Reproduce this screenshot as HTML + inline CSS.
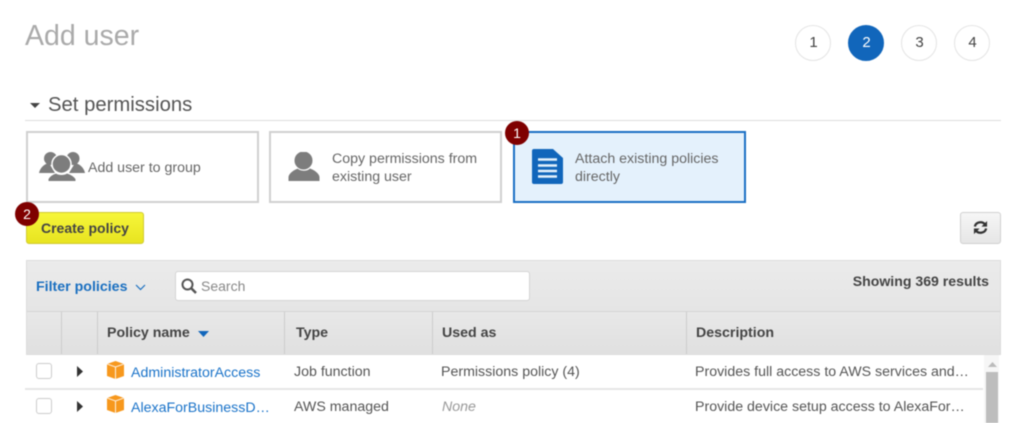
<!DOCTYPE html>
<html><head><meta charset="utf-8"><style>
html,body{margin:0;padding:0;background:#fff}
#p{position:relative;width:1024px;height:423px;overflow:hidden;background:#fff;font-family:"Liberation Sans",sans-serif;filter:blur(.45px)}
#p div,#p span.a,#p svg{position:absolute}
.t{white-space:nowrap}
.c{box-sizing:border-box;width:36px;height:36px;border:1px solid #e4e4e4;border-radius:50%;text-align:center;line-height:34px;font-size:15px;color:#444;top:25px;padding-left:1px}
.box{box-sizing:border-box;top:131px;height:72px;width:233px;border:2px solid #d0d0d0;background:#fff}
.lbl{font-size:14.2px;line-height:18px;color:#666;white-space:nowrap}
.bad{width:24px;height:24px;border-radius:50%;background:#7f0000;color:#fff;font-size:14px;line-height:24px;text-align:center}
.th{font-size:14.2px;font-weight:bold;color:#444;top:325px;white-space:nowrap}
.vl{width:1px;top:312px;height:42px;background:#ccc}
.cell{font-size:14.2px;color:#555;white-space:nowrap}
.cb{box-sizing:border-box;left:36px;width:16px;height:16px;border:1px solid #ccc;border-radius:3px;background:#fff}
</style></head><body><div id="p">
<div class="t" style="left:25px;top:19px;font-size:28.500px;line-height:34px;color:#aaa">Add user</div>
<div class="c" style="left:795px">1</div>
<div class="c" style="left:848px;background:#1166bb;border-color:#1166bb;color:#fff">2</div>
<div class="c" style="left:901px">3</div>
<div class="c" style="left:954px">4</div>
<svg style="left:30px;top:103px" width="10" height="6"><path d="M0 0H10L5 5Z" fill="#444"/></svg>
<div class="t" style="left:48px;top:93px;font-size:20.300px;line-height:24px;color:#555">Set permissions</div>
<div style="left:25px;top:120px;width:976px;height:1px;background:#ddd"></div>

<div class="box" style="left:26px"></div>
<svg style="left:39px;top:151px" width="47" height="31" viewBox="0 0 47 31" fill="#7d7d7d">
<circle cx="11.500" cy="7.500" r="6.500"/><circle cx="34" cy="7.500" r="6.500"/>
<path d="M0 22C1 17 5 13 10 12L16 22Z"/><path d="M46 22C45 17 41 13 36 12L30 22Z"/>
<circle cx="22.500" cy="13" r="9.500" stroke="#fff" stroke-width="1.500"/>
<path d="M9 30.500V28C10 26 13 23 17 22C20 24 25 24 28 22C32 23 36 26 37 28V30.500Z" stroke="#fff" stroke-width="1"/>
</svg>
<div class="lbl" style="left:88px;top:159px">Add user to group</div>

<div class="box" style="left:269px"></div>
<svg style="left:288px;top:152px" width="32" height="30" viewBox="0 0 32 30" fill="#7d7d7d">
<path d="M0.500 29V25C1 21 6 18 10 16.500C13 19.500 19 19.500 22 16.500C26 18 31 21 31.500 25V29Z"/>
<circle cx="15.500" cy="8.500" r="9.500" stroke="#fff" stroke-width="1"/>
</svg>
<div class="lbl" style="left:332px;top:150px">Copy permissions from<br>existing user</div>

<div class="box" style="left:513px;background:#e4f1fc;border-color:#1a6fc4"></div>
<svg style="left:532px;top:149px" width="31" height="35" viewBox="0 0 31 35">
<path d="M2 0H21L31 9V33Q31 35 29 35H2Q0 35 0 33V2Q0 0 2 0Z" fill="#1166bb"/>
<path d="M6 10.500H25M6 16.500H25M6 22H25M6 27.500H25" stroke="#e4f1fc" stroke-width="2.500"/>
</svg>
<div class="lbl" style="left:575px;top:150px">Attach existing policies<br>directly</div>
<div class="bad" style="left:505px;top:121px">1</div>

<div style="box-sizing:border-box;left:26px;top:212px;width:118px;height:32px;border:1px solid #d0ca30;border-radius:3px;background:linear-gradient(#f6f63a,#e8e420);font-size:14px;font-weight:bold;color:#444;line-height:30px;padding-left:14px">Create policy</div>
<div class="bad" style="left:15px;top:202px">2</div>
<div style="box-sizing:border-box;left:960px;top:212px;width:41px;height:32px;border:1px solid #d0d0d0;border-radius:3px;background:linear-gradient(#f6f6f6,#e6e6e6)"></div>
<svg style="left:973px;top:220px" width="15" height="15" viewBox="0 0 16 16" fill="none" stroke="#333" stroke-width="2.400">
<path d="M2 7A6 5.500 0 0 1 13 5"/><path d="M14 9A6 5.500 0 0 1 3 11"/>
<path d="M15 1V7H9Z" fill="#333" stroke="none"/><path d="M1 15V9H7Z" fill="#333" stroke="none"/>
</svg>

<div style="box-sizing:border-box;left:26px;top:260px;width:975px;height:95px;background:linear-gradient(#ebebeb,#e0e0e0);border:1px solid #dcdcdc"></div>
<div style="left:27px;top:311px;width:973px;height:1px;background:#d4d4d4"></div>
<div style="left:27px;top:312px;width:973px;height:42px;background:linear-gradient(#e8e8e8,#e0e0e0)"></div>
<div class="t" style="left:36px;top:279px;font-size:14.200px;font-weight:bold;color:#1a6fc0">Filter policies</div>
<svg style="left:135px;top:284px" width="11" height="7"><path d="M1 1L5.500 5.500L10 1" fill="none" stroke="#1a6fc0" stroke-width="1.200"/></svg>
<div style="box-sizing:border-box;left:175px;top:271px;width:355px;height:30px;background:#fff;border:1px solid #d4d4d4;border-radius:3px"></div>
<svg style="left:181px;top:278px" width="16" height="16" viewBox="0 0 16 16" fill="none" stroke="#555" stroke-width="2"><circle cx="6.500" cy="6.500" r="5"/><path d="M10 10L15 15" stroke-width="2.500"/></svg>
<div class="t" style="left:201px;top:278px;font-size:14px;color:#888">Search</div>
<div class="t" style="right:35px;top:273px;font-size:14.100px;font-weight:bold;color:#444">Showing 369 results</div>

<div class="vl" style="left:61px"></div><div class="vl" style="left:97px"></div><div class="vl" style="left:284px"></div><div class="vl" style="left:432px"></div><div class="vl" style="left:686px"></div>
<div class="th" style="left:107px">Policy name</div>
<svg style="left:198px;top:331px" width="11" height="6"><path d="M0 0H11L5.500 6Z" fill="#1166bb"/></svg>
<div class="th" style="left:296px">Type</div>
<div class="th" style="left:442px">Used as</div>
<div class="th" style="left:696px">Description</div>

<div style="left:25px;top:388px;width:958px;height:2px;background:#e6e6e6"></div>
<div class="cb" style="top:363px"></div><div class="cb" style="top:398px"></div>
<svg style="left:76px;top:366px" width="8" height="11"><path d="M1 0L7 5.500L1 11Z" fill="#333"/></svg>
<svg style="left:76px;top:401px" width="8" height="11"><path d="M1 0L7 5.500L1 11Z" fill="#333"/></svg>
<svg style="left:106.500px;top:360.500px" width="17" height="18" viewBox="0 0 16 18" preserveAspectRatio="none"><path d="M8 0L16 3V15L8 18L0 15V3Z" fill="#f7981d"/><path d="M0 3L8 6L16 3M8 6V18" fill="none" stroke="#fff" stroke-width="1" stroke-opacity=".85"/></svg>
<svg style="left:106.500px;top:394.500px" width="17" height="18" viewBox="0 0 16 18" preserveAspectRatio="none"><path d="M8 0L16 3V15L8 18L0 15V3Z" fill="#f7981d"/><path d="M0 3L8 6L16 3M8 6V18" fill="none" stroke="#fff" stroke-width="1" stroke-opacity=".85"/></svg>
<div class="cell" style="left:131px;top:365px;color:#1a73c9">AdministratorAccess</div>
<div class="cell" style="left:131px;top:400px;color:#1a73c9">AlexaForBusinessD…</div>
<div class="cell" style="left:294px;top:364px">Job function</div>
<div class="cell" style="left:294px;top:399px">AWS managed</div>
<div class="cell" style="left:441px;top:364px">Permissions policy (4)</div>
<div class="cell" style="left:442px;top:399px;color:#999;font-style:italic">None</div>
<div class="cell" style="left:695px;top:364px">Provides full access to AWS services and…</div>
<div class="cell" style="left:695px;top:399px">Provide device setup access to AlexaFor…</div>

<div style="left:984px;top:355px;width:15px;height:68px;background:#f6f6f6"></div>
<svg style="left:988px;top:362px" width="9" height="5"><path d="M0 5L4.500 0L9 5Z" fill="#bbb"/></svg>
<div style="left:986px;top:372px;width:12px;height:51px;background:#bdbdbd"></div>
</div></body></html>
